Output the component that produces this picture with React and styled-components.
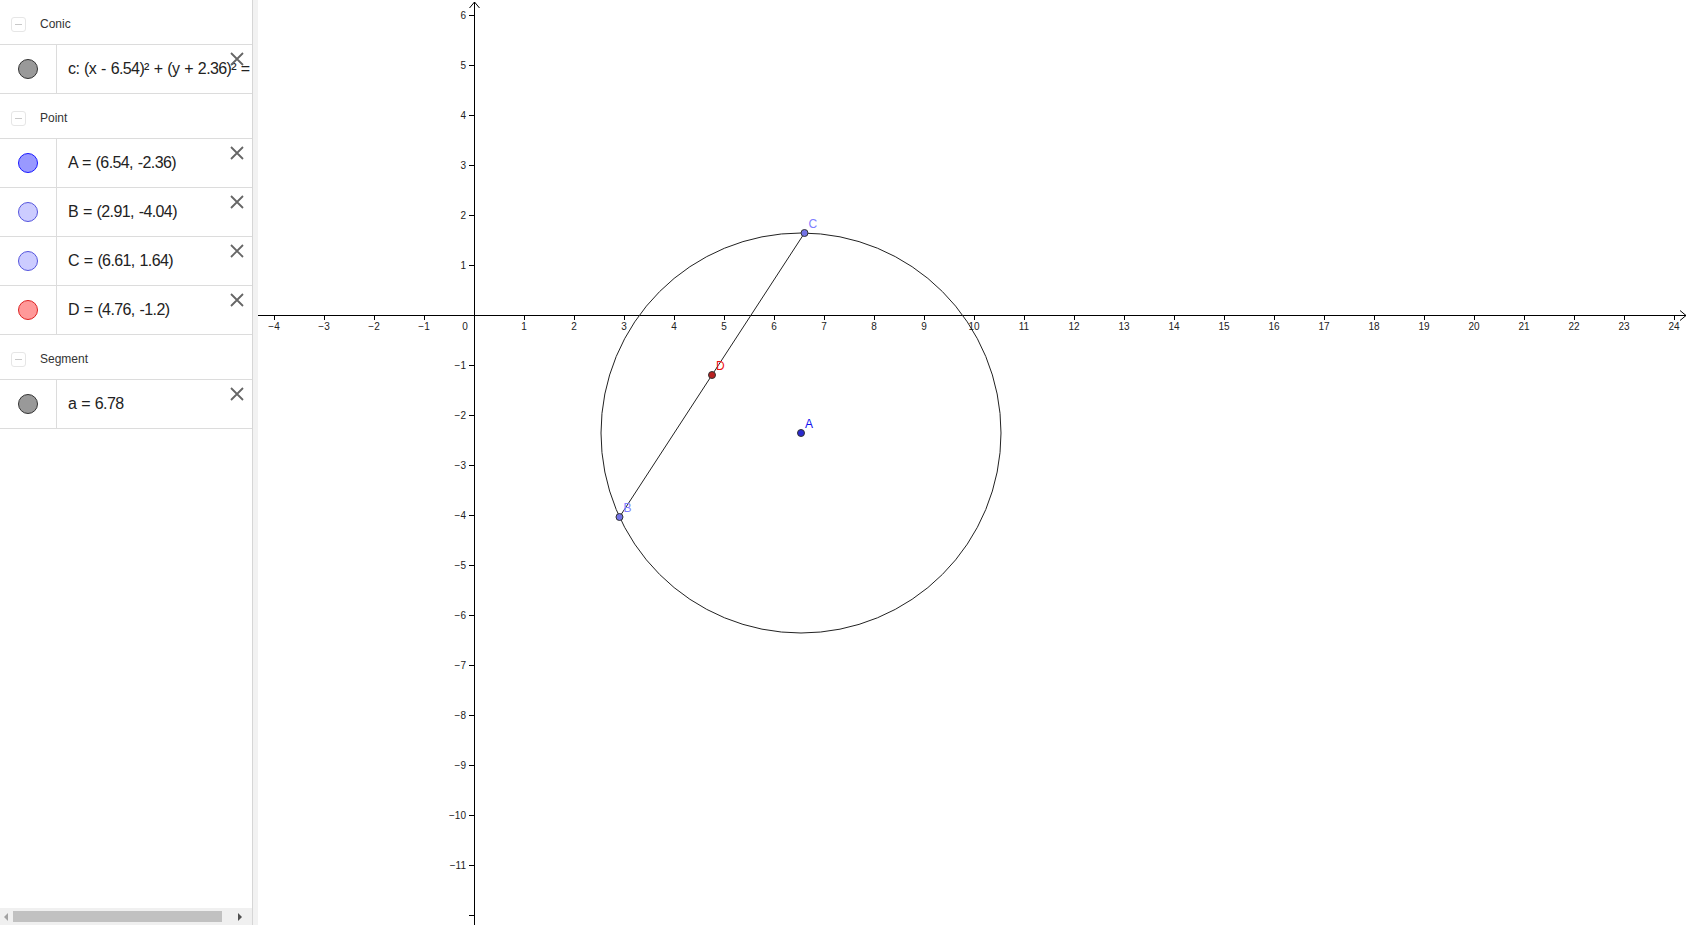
import React from 'react';
import styled, { createGlobalStyle } from 'styled-components';

const GlobalStyle = createGlobalStyle`
    html, body {
        margin: 0;
        padding: 0;
        background: #fff;
        overflow: hidden;
    }
    body {
        font-family: "Liberation Sans", Arial, sans-serif;
    }
`;

const sections = [
    {
        title: 'Conic',
        items: [{ text: 'c: (x - 6.54)² + (y + 2.36)² = 16', fill: '#999999', stroke: '#333333' }],
    },
    {
        title: 'Point',
        items: [
            { text: 'A = (6.54, -2.36)', fill: '#9999ff', stroke: '#1a1aff' },
            { text: 'B = (2.91, -4.04)', fill: '#ccccff', stroke: '#5555dd' },
            { text: 'C = (6.61, 1.64)', fill: '#ccccff', stroke: '#5555dd' },
            { text: 'D = (4.76, -1.2)', fill: '#ff9999', stroke: '#dd2222' },
        ],
    },
    {
        title: 'Segment',
        items: [{ text: 'a = 6.78', fill: '#999999', stroke: '#333333' }],
    },
];

// graph coordinates -> page pixels
const ORIGIN_X = 474;
const ORIGIN_Y = 315;
const UNIT = 50;
const px = (x) => ORIGIN_X + x * UNIT;
const py = (y) => ORIGIN_Y - y * UNIT;

const points = [
    { name: 'A', x: 6.54, y: -2.36, fill: '#2a2ad0', label: '#1010ee' },
    { name: 'B', x: 2.91, y: -4.04, fill: '#7373e6', label: '#8080ff' },
    { name: 'C', x: 6.61, y: 1.64, fill: '#7373e6', label: '#8080ff' },
    { name: 'D', x: 4.76, y: -1.2, fill: '#b82020', label: '#ee1010' },
];

const minus = (n) => (n < 0 ? `\u2212${-n}` : `${n}`);

const CloseIcon = () => (
    <svg width="14" height="14" viewBox="0 0 14 14">
        <path d="M1 1 L13 13 M13 1 L1 13" stroke="#666" strokeWidth="1.8" fill="none" />
    </svg>
);

const Graphics = () => {
    const xTicks = [];
    for (let n = -4; n <= 24; n++) xTicks.push(n);
    const yTicks = [];
    for (let n = 6; n >= -12; n--) yTicks.push(n);
    const B = points[1];
    const C = points[2];
    return (
        <GraphSvg viewBox="258 0 1431 925" width="1431" height="925">
            <g stroke="#000" strokeWidth="1" shapeRendering="crispEdges">
                <line x1="258" y1={ORIGIN_Y + 0.5} x2="1686" y2={ORIGIN_Y + 0.5} />
                <line x1={ORIGIN_X + 0.5} y1="925" x2={ORIGIN_X + 0.5} y2="2" />
            </g>
            <g stroke="#000" strokeWidth="1" fill="none">
                <path d={`M1680 ${ORIGIN_Y - 4.5} L1686 ${ORIGIN_Y + 0.5} L1680 ${ORIGIN_Y + 5.5}`} />
                <path d={`M${ORIGIN_X - 4.5} 8 L${ORIGIN_X + 0.5} 2 L${ORIGIN_X + 5.5} 8`} />
            </g>
            <g stroke="#000" strokeWidth="1" shapeRendering="crispEdges">
                {xTicks.filter((n) => n !== 0).map((n) => (
                    <line key={`xt${n}`} x1={px(n) + 0.5} y1={ORIGIN_Y} x2={px(n) + 0.5} y2={ORIGIN_Y + 5} />
                ))}
                {yTicks.filter((n) => n !== 0).map((n) => (
                    <line key={`yt${n}`} x1={ORIGIN_X - 5} y1={py(n) + 0.5} x2={ORIGIN_X} y2={py(n) + 0.5} />
                ))}
            </g>
            <g fill="#222" fontSize="10" fontFamily='"Liberation Sans", Arial, sans-serif'>
                {xTicks.filter((n) => n !== 0).map((n) => (
                    <text key={`xl${n}`} x={px(n)} y={ORIGIN_Y + 15} textAnchor="middle">{minus(n)}</text>
                ))}
                <text x={ORIGIN_X - 9} y={ORIGIN_Y + 15} textAnchor="middle">0</text>
                {yTicks.filter((n) => n !== 0 && n > -12).map((n) => (
                    <text key={`yl${n}`} x={ORIGIN_X - 8} y={py(n) + 4} textAnchor="end">{minus(n)}</text>
                ))}
            </g>
            <circle cx={px(6.54)} cy={py(-2.36)} r={4 * UNIT} stroke="#222" strokeWidth="1" fill="none" />
            <line x1={px(B.x)} y1={py(B.y)} x2={px(C.x)} y2={py(C.y)} stroke="#222" strokeWidth="1" />
            {points.map((p) => (
                <g key={p.name}>
                    <circle cx={px(p.x)} cy={py(p.y)} r="3.5" fill={p.fill} stroke="#333" strokeWidth="1" />
                    <text
                        x={px(p.x) + 4}
                        y={py(p.y) - 5}
                        fill={p.label}
                        fontSize="12"
                        fontFamily='"Liberation Sans", Arial, sans-serif'
                    >
                        {p.name}
                    </text>
                </g>
            ))}
        </GraphSvg>
    );
};

const App = () => {
    return (
        <>
            <GlobalStyle />
            <StyledApp>
                <StyledAlgebra>
                    <StyledList>
                        {sections.map((s) => (
                            <section key={s.title}>
                                <StyledHeader>
                                    <StyledToggle />
                                    <span>{s.title}</span>
                                </StyledHeader>
                                {s.items.map((item) => (
                                    <StyledRow key={item.text}>
                                        <StyledMarkerCell>
                                            <StyledMarker $fill={item.fill} $stroke={item.stroke} />
                                        </StyledMarkerCell>
                                        <StyledValue>{item.text}</StyledValue>
                                        <StyledDelete>
                                            <CloseIcon />
                                        </StyledDelete>
                                    </StyledRow>
                                ))}
                            </section>
                        ))}
                    </StyledList>
                    <StyledScrollbar>
                        <StyledArrow $dir="left" />
                        <StyledThumb />
                        <StyledArrow $dir="right" />
                    </StyledScrollbar>
                </StyledAlgebra>
                <StyledSplitter />
                <StyledView>
                    <Graphics />
                </StyledView>
            </StyledApp>
        </>
    );
};

const StyledApp = styled.div`
    display: flex;
    width: 1689px;
    height: 925px;
    overflow: hidden;
`;

const StyledAlgebra = styled.aside`
    display: flex;
    flex-direction: column;
    width: 252px;
    flex-shrink: 0;
    background: #fff;
`;

const StyledList = styled.div`
    flex: 1;
    overflow: hidden;
`;

const StyledHeader = styled.div`
    display: flex;
    align-items: center;
    height: 40px;
    padding: 4px 0 0 11px;
    border-bottom: 1px solid #dcdcdc;
    & > span {
        margin-left: 14px;
        font-size: 12px;
        color: #333;
    }
`;

const StyledToggle = styled.div`
    position: relative;
    width: 13px;
    height: 13px;
    border: 1px solid #e6e6e6;
    border-radius: 3px;
    &::after {
        content: '';
        position: absolute;
        left: 3px;
        right: 3px;
        top: 6px;
        height: 1px;
        background: #c8c8c8;
    }
`;

const StyledRow = styled.div`
    position: relative;
    display: flex;
    align-items: stretch;
    height: 48px;
    border-bottom: 1px solid #dcdcdc;
    overflow: hidden;
`;

const StyledMarkerCell = styled.div`
    display: flex;
    align-items: center;
    justify-content: center;
    width: 56px;
    flex-shrink: 0;
    border-right: 1px solid #dcdcdc;
`;

const StyledMarker = styled.div`
    width: 18px;
    height: 18px;
    border-radius: 50%;
    background: ${(p) => p.$fill};
    border: 1px solid ${(p) => p.$stroke};
`;

const StyledValue = styled.div`
    display: flex;
    align-items: center;
    padding-left: 11px;
    font-size: 16px;
    letter-spacing: -0.6px;
    word-spacing: 1px;
    color: #222;
    white-space: nowrap;
`;

const StyledDelete = styled.div`
    position: absolute;
    top: 7px;
    right: 8px;
    width: 14px;
    height: 14px;
    line-height: 0;
`;

const StyledScrollbar = styled.div`
    display: flex;
    align-items: center;
    height: 17px;
    padding: 0 4px;
    gap: 5px;
    background: #f0f0f0;
`;

const StyledThumb = styled.div`
    width: 209px;
    height: 11px;
    background: #c1c1c1;
`;

const StyledArrow = styled.div`
    width: 0;
    height: 0;
    border-top: 4px solid transparent;
    border-bottom: 4px solid transparent;
    ${(p) =>
        p.$dir === 'left'
            ? 'border-right: 4px solid #a3a3a3;'
            : 'border-left: 4px solid #505050; margin-left: 11px;'}
`;

const StyledSplitter = styled.div`
    width: 6px;
    flex-shrink: 0;
    background: #f2f2f2;
    border-left: 1px solid #d6d6d6;
    box-sizing: border-box;
`;

const StyledView = styled.main`
    flex: 1;
    background: #fff;
    overflow: hidden;
`;

const GraphSvg = styled.svg`
    display: block;
`;

export default App;
